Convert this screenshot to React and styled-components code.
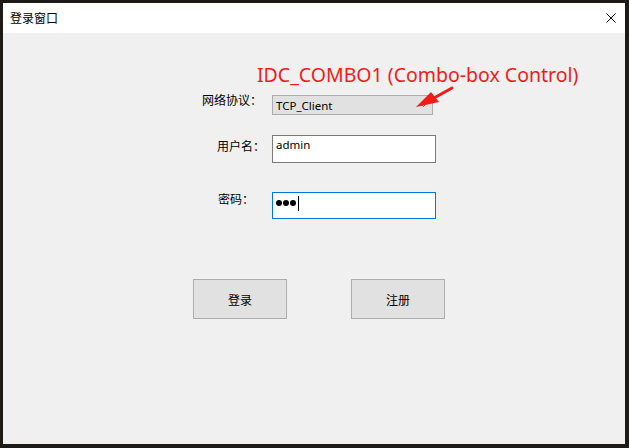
import React from "react";
import styled, { createGlobalStyle } from "styled-components";

const Global = createGlobalStyle`
  html, body { margin: 0; padding: 0; }
  body {
    background: #1d1b1a;
    width: 629px;
    height: 448px;
    overflow: hidden;
    font-family: "Noto Sans", "Noto Sans CJK SC", sans-serif;
  }
  #root { padding: 3px 0 0 3px; }
`;

const Window = styled.div`
  width: 622px;
  height: 441px;
  display: flex;
  flex-direction: column;
  background: #f0f0f0;
`;

const TitleBar = styled.div`
  height: 30px;
  background: #ffffff;
  display: flex;
  align-items: center;
  justify-content: space-between;
  padding: 0 9px 0 7px;
`;

const Title = styled.span`
  font-family: "Noto Sans CJK SC", sans-serif;
  font-size: 12px;
  color: #000;
  line-height: 16px;
`;

const CloseBtn = styled.div`
  width: 10px;
  height: 10px;
  display: flex;
`;

const Content = styled.div`
  position: relative;
  flex: 1;
  padding-top: 62px;
  display: flex;
  flex-direction: column;
`;

const Row = styled.div`
  display: grid;
  grid-template-columns: 269px 164px;
  align-items: start;
  margin-top: ${(p) => p.$gap || 0}px;
`;

const Label = styled.span`
  font-family: "Noto Sans CJK SC", sans-serif;
  font-size: 12px;
  line-height: 16px;
  color: #000;
  padding-left: ${(p) => p.$x}px;
  margin-top: ${(p) => p.$dy}px;
  white-space: nowrap;
`;

const Combo = styled.div`
  width: 161px;
  height: 20px;
  box-sizing: border-box;
  background: #e1e1e1;
  border: 1px solid #adadad;
  display: flex;
  align-items: center;
  justify-content: space-between;
  padding: 0 5px 0 3px;
  font-family: "Noto Sans", sans-serif;
  font-size: 11.5px;
  color: #000;
`;

const Field = styled.div`
  width: 164px;
  height: ${(p) => p.$h}px;
  box-sizing: border-box;
  background: #fff;
  border: 1px solid ${(p) => (p.$focused ? "#0078d7" : "#7a7a7a")};
  padding: ${(p) => p.$pt}px 3px 0 3px;
  font-family: "Noto Sans", sans-serif;
  font-size: 11.5px;
  line-height: 16px;
  color: #000;
  display: flex;
  align-items: flex-start;
`;

const Dots = styled.span`
  display: flex;
  gap: 1px;
  align-items: center;
  height: 16px;
`;

const Dot = styled.span`
  width: 6px;
  height: 6px;
  border-radius: 50%;
  background: #000;
`;

const Caret = styled.span`
  width: 1px;
  height: 15px;
  background: #000;
  margin-left: 2px;
  margin-top: 1px;
`;

const ButtonRow = styled.div`
  display: flex;
  gap: 64px;
  padding-left: 190px;
  margin-top: 60px;
`;

const Button = styled.div`
  width: 94px;
  height: 40px;
  box-sizing: border-box;
  background: #e1e1e1;
  border: 1px solid #adadad;
  display: flex;
  align-items: center;
  justify-content: center;
  font-family: "Noto Sans CJK SC", sans-serif;
  font-size: 12px;
  color: #000;
`;

const Annotation = styled.div`
  position: absolute;
  left: 254px;
  top: 27px;
  font-family: "Noto Sans", sans-serif;
  font-size: 19.5px;
  line-height: 30px;
  color: #f51a1a;
  white-space: nowrap;
`;

const ArrowSvg = styled.svg`
  position: absolute;
  left: 405px;
  top: 50px;
`;

export default function App() {
  return (
    <>
      <Global />
      <Window>
        <TitleBar>
          <Title>登录窗口</Title>
          <CloseBtn>
            <svg width="10" height="10" viewBox="0 0 10 10">
              <path d="M0.5 0.5 L9.5 9.5 M9.5 0.5 L0.5 9.5" stroke="#000" strokeWidth="1" />
            </svg>
          </CloseBtn>
        </TitleBar>
        <Content>
          <Row>
            <Label $x={199} $dy={-3}>网络协议：</Label>
            <Combo>
              <span>TCP_Client</span>
              <svg width="7" height="4" viewBox="0 0 7 4">
                <path d="M0.5 0.5 L3.5 3.5 L6.5 0.5" stroke="#555" fill="none" strokeWidth="1" />
              </svg>
            </Combo>
          </Row>
          <Row $gap={20}>
            <Label $x={214} $dy={3}>用户名：</Label>
            <Field $h={28} $pt={1}>admin</Field>
          </Row>
          <Row $gap={29}>
            <Label $x={215} $dy={-1}>密码：</Label>
            <Field $h={27} $pt={2} $focused>
              <Dots>
                <Dot />
                <Dot />
                <Dot />
              </Dots>
              <Caret />
            </Field>
          </Row>
          <ButtonRow>
            <Button>登录</Button>
            <Button>注册</Button>
          </ButtonRow>
          <Annotation>IDC_COMBO1 (Combo-box Control)</Annotation>
          <ArrowSvg width="50" height="30" viewBox="0 0 50 30">
            <path d="M44 5 L26 15" stroke="#f51a1a" strokeWidth="3" strokeLinecap="round" />
            <polygon points="8,24 23,9 31,19" fill="#f51a1a" />
          </ArrowSvg>
        </Content>
      </Window>
    </>
  );
}
